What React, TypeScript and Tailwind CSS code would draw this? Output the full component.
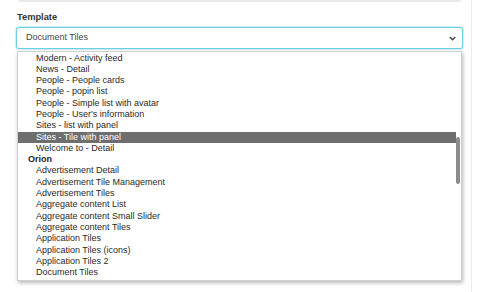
import React from "react";

const items: { label: string; group?: boolean; selected?: boolean }[] = [
  { label: "Modern - Activity feed" },
  { label: "News - Detail" },
  { label: "People - People cards" },
  { label: "People - popin list" },
  { label: "People - Simple list with avatar" },
  { label: "People - User's information" },
  { label: "Sites - list with panel" },
  { label: "Sites - Tile with panel", selected: true },
  { label: "Welcome to - Detail" },
  { label: "Orion", group: true },
  { label: "Advertisement Detail" },
  { label: "Advertisement Tile Management" },
  { label: "Advertisement Tiles" },
  { label: "Aggregate content List" },
  { label: "Aggregate content Small Slider" },
  { label: "Aggregate content Tiles" },
  { label: "Application Tiles" },
  { label: "Application Tiles (icons)" },
  { label: "Application Tiles 2" },
  { label: "Document Tiles" },
];

export default function App() {
  return (
    <div className="w-[480px] h-[292px] bg-white overflow-hidden flex font-['Liberation_Sans',Arial,sans-serif]">
      <div className="w-[472px] h-full border-r border-[#ececec] pl-[16px] pr-[8px]">
        <div className="mx-[2px] h-[2px] bg-[#e8e8e8] rounded-b-[2px]" />
        <div className="mt-[10px] text-[9.3px] leading-[11px] font-bold text-[#333] pl-[1px]">Template</div>
        <div className="relative mt-[4px]">
          <div className="h-[22px] rounded-[3px] border border-[#6fd0e2] shadow-[0_0_0_0.5px_#9fe0ec] bg-white flex items-center pl-[9px] pr-[6px]">
            <span className="flex-1 text-[9px] text-[#444]">Document Tiles</span>
            <svg width="7" height="5" viewBox="0 0 7 5">
              <path d="M0.8 1 L3.5 3.7 L6.2 1" fill="none" stroke="#444" strokeWidth="1.5" />
            </svg>
          </div>
          <div className="absolute left-[1px] right-[1px] top-[24px] h-[230px] bg-white border border-[#cfcfcf] shadow-[1px_2px_4px_rgba(0,0,0,0.28)] flex pt-[0.5px]">
            <div className="flex-1 flex flex-col">
              {items.map((it) => (
                <div
                  key={it.label}
                  className={
                    "h-[11.3px] leading-[11.3px] text-[9px] whitespace-nowrap " +
                    (it.group
                      ? "pl-[10px] font-bold text-[#222]"
                      : it.selected
                      ? "pl-[18px] bg-[#6e6e6e] text-white"
                      : "pl-[18px] text-[#2a2a2a]")
                  }
                >
                  {it.label}
                </div>
              ))}
            </div>
            <div className="w-[5px] relative">
              <div className="absolute left-[0px] top-[84px] w-[4px] h-[47px] rounded-[2px] bg-[#8c8c8c]" />
            </div>
          </div>
        </div>
      </div>
    </div>
  );
}
